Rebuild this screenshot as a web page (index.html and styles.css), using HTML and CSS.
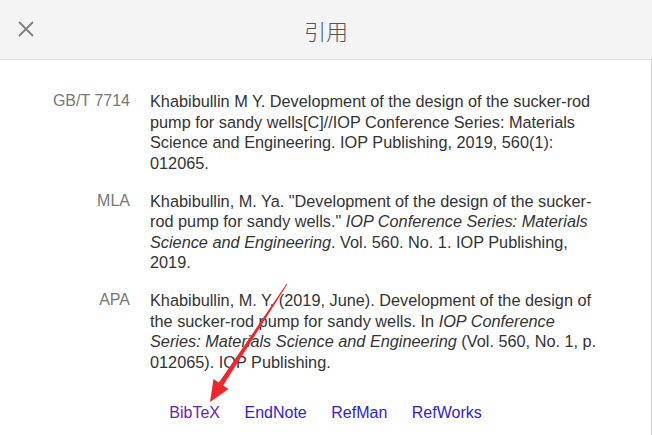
FILE: index.html
```html
<!DOCTYPE html>
<html lang="zh">
<head>
<meta charset="utf-8">
<title>引用</title>
<link rel="stylesheet" href="styles.css">
</head>
<body>
<div class="modal">
  <header class="modal-header">
    <button class="close" aria-label="close">
      <svg width="16" height="16" viewBox="0 0 16 16"><path d="M1 1 L15 15 M15 1 L1 15" stroke="#808080" stroke-width="1.8" fill="none"/></svg>
    </button>
    <h1 class="title">引用</h1>
  </header>
  <div class="modal-body">
    <div class="cite-row">
      <div class="cite-label">GB/T 7714</div>
      <div class="cite-text">Khabibullin M Y. Development of the design of the sucker-rod pump for sandy wells[C]//IOP Conference Series: Materials Science and Engineering. IOP Publishing, 2019, 560(1): 012065.</div>
    </div>
    <div class="cite-row">
      <div class="cite-label">MLA</div>
      <div class="cite-text">Khabibullin, M. Ya. "Development of the design of the sucker-rod pump for sandy wells." <i>IOP Conference Series: Materials Science and Engineering</i>. Vol. 560. No. 1. IOP Publishing, 2019.</div>
    </div>
    <div class="cite-row">
      <div class="cite-label">APA</div>
      <div class="cite-text">Khabibullin, M. Y. (2019, June). Development of the design of the sucker-rod pump for sandy wells. In <i>IOP Conference Series: Materials Science and Engineering</i> (Vol. 560, No. 1, p. 012065). IOP Publishing.</div>
    </div>
    <nav class="links">
      <a class="link visited" href="#">BibTeX</a>
      <a class="link" href="#">EndNote</a>
      <a class="link" href="#">RefMan</a>
      <a class="link" href="#">RefWorks</a>
    </nav>
  </div>
  <svg class="annotation" width="652" height="435" viewBox="0 0 652 435">
    <polygon fill="#f2262a" points="286.6,283.7 287.4,284.3 223.1,385.4 228.5,389 210,402 213.5,379 218.9,382.6"/>
  </svg>
</div>
</body>
</html>
```
FILE: styles.css
```css
html, body {
  margin: 0;
  padding: 0;
  background: #fff;
}
body {
  font-family: "Liberation Sans", Arial, "Noto Sans CJK SC", sans-serif;
}
.modal {
  position: relative;
  width: 652px;
  height: 435px;
  display: flex;
  flex-direction: column;
  overflow: hidden;
}
.modal-header {
  height: 59px;
  flex: none;
  background: #f4f4f4;
  border-bottom: 1px solid #dcdcdc;
  display: flex;
  align-items: center;
  justify-content: center;
  position: relative;
}
.close {
  position: absolute;
  left: 18px;
  top: 21px;
  width: 16px;
  height: 16px;
  padding: 0;
  border: 0;
  background: none;
  display: block;
}
.close svg { display: block; }
.title {
  margin: 0;
  font-family: "Noto Sans CJK SC", sans-serif;
  font-weight: 300;
  font-size: 22px;
  line-height: 1;
  color: #555;
}
.modal-body {
  flex: 1;
  border-right: 1px solid #d6d6d6;
  padding-top: 31px;
}
.cite-row {
  display: grid;
  grid-template-columns: 130px 456px;
  column-gap: 20px;
  font-size: 16px;
  line-height: 20.5px;
  margin-bottom: 17.5px;
}
.cite-row:last-of-type {
  margin-bottom: 0;
}
.cite-label {
  text-align: right;
  color: #777;
}
.cite-text {
  color: #333;
  font-size: 16.3px;
}
.links {
  display: flex;
  justify-content: center;
  gap: 24.5px;
  margin-top: 31px;
  font-size: 16px;
  line-height: 20px;
}
.link {
  color: #3322cc;
  text-decoration: none;
}
.link.visited {
  color: #6a1fa8;
}
.annotation {
  position: absolute;
  left: 0;
  top: 0;
  pointer-events: none;
}
```
